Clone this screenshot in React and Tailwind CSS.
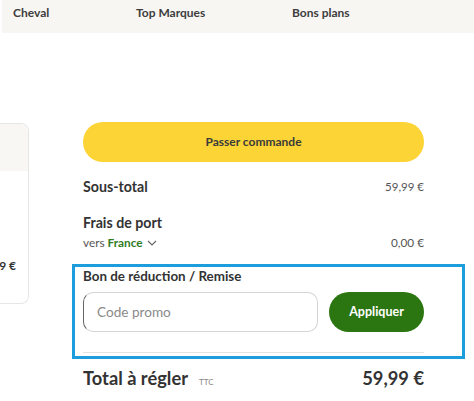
import React from 'react';

const font = { fontFamily: 'Lato, "Noto Sans", sans-serif' };

const App = () => {
  return (
    <div className="w-[474px] h-[401px] overflow-hidden bg-white text-[#333]" style={font}>
      {/* Top nav */}
      <div className="ml-[2px] h-[33px] bg-[#f7f6f3] flex pl-[11px] pt-[4px] text-[12px] font-bold text-[#3d3d3d]">
        <span className="w-[123px]">Cheval</span>
        <span className="w-[156px]">Top Marques</span>
        <span>Bons plans</span>
      </div>

      <div className="flex mt-[89px]">
        {/* Left card (cut off by the viewport) */}
        <div className="w-[29px] h-[181px] mt-[1px] border border-l-0 border-[#e6e6e6] rounded-r-[8px] overflow-hidden flex flex-col">
          <div className="h-[47px] bg-[#f8f7f4]" />
          <div className="flex-1 flex justify-end pr-[12px] pt-[86px] text-[12px] font-bold text-[#333] whitespace-nowrap">9 €</div>
        </div>

        {/* Summary column */}
        <div className="w-[341px] ml-[54px] flex flex-col">
          <button className="h-[40px] w-full rounded-full bg-[#fdd435] text-[12px] font-bold text-[#3a3a3a]">
            Passer commande
          </button>

          <div className="mt-[16px] flex justify-between items-center h-[18px]">
            <span className="text-[14.2px] font-bold text-[#333]">Sous-total</span>
            <span className="text-[11.5px] text-[#555]">59,99 €</span>
          </div>

          <div className="mt-[18px] h-[18px] text-[14.2px] font-bold text-[#333] flex items-center">Frais de port</div>
          <div className="mt-[3px] flex justify-between items-center h-[16px] text-[11.8px] text-[#555]">
            <span className="flex items-center gap-[4px]">
              <span>vers <span className="font-bold text-[#2f7d1f]">France</span></span>
              <svg width="10" height="6" viewBox="0 0 10 6" fill="none" stroke="#666" strokeWidth="1.1">
                <path d="M1 1l4 4 4-4" />
              </svg>
            </span>
            <span>0,00 €</span>
          </div>

          {/* Promo code (highlighted) */}
          <div className="mt-[13px] -ml-[11px] -mr-[41px] border-[3px] border-[#1b9edb] pl-[8px] pr-[38px] pt-[1px] pb-[3px]">
            <div className="h-[17px] flex items-center text-[13.4px] font-bold text-[#333]">Bon de réduction / Remise</div>
            <div className="mt-[7px] flex gap-[11px]">
              <div className="flex-1 h-[40px] rounded-[10px] border border-[#d4d4d4] border-l-[#666] flex items-center pl-[13px] text-[13.6px] text-[#8a8a8a]">
                Code promo
              </div>
              <button className="w-[95px] h-[40px] rounded-full bg-[#2b7611] text-white text-[12.5px] font-bold">
                Appliquer
              </button>
            </div>
            <div className="mt-[20px] h-px bg-[#e4e4e4]" />
          </div>

          <div className="mt-[8px] flex justify-between items-center h-[24px]">
            <span className="flex items-baseline gap-[11px]">
              <span className="text-[18.3px] font-bold text-[#333]">Total à régler</span>
              <span className="text-[8px] text-[#888]">TTC</span>
            </span>
            <span className="text-[18.3px] font-bold text-[#333]">59,99 €</span>
          </div>
        </div>
      </div>
    </div>
  );
};

export default App;
